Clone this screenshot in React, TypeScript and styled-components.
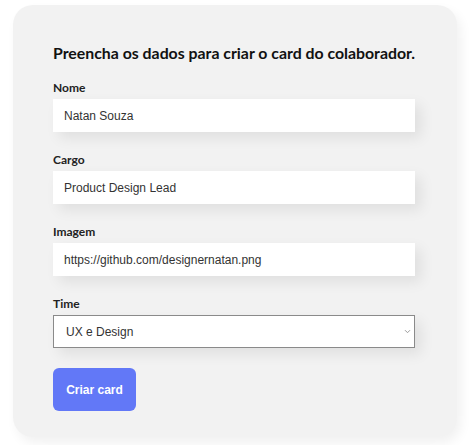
import styled, { createGlobalStyle } from "styled-components";

const GlobalStyle = createGlobalStyle`
  body {
    margin: 0;
    background: #ffffff;
  }
  * {
    box-sizing: border-box;
  }
`;

const Page = styled.div`
  padding: 5px 17px 8px 13px;
`;

const Card = styled.form`
  width: 444px;
  background: #f2f2f2;
  border-radius: 20px;
  box-shadow: 4px 6px 12px rgba(0, 0, 0, 0.06);
  padding: 38px 42px 26px 40px;
  display: flex;
  flex-direction: column;
`;

const Title = styled.h2`
  margin: 0 0 17px;
  font-family: Lato, "Noto Sans", sans-serif;
  font-weight: 700;
  font-size: 15.85px;
  line-height: 20px;
  white-space: nowrap;
  color: #111;
`;

const Field = styled.div`
  display: flex;
  flex-direction: column;
  gap: 4px;
  margin-bottom: 20px;
`;

const Label = styled.label`
  font-family: Lato, "Noto Sans", sans-serif;
  font-weight: 700;
  font-size: 12px;
  line-height: 15px;
  color: #222;
`;

const TextInput = styled.input`
  width: 362px;
  height: 33px;
  border: none;
  background: #fff;
  padding: 0 11px;
  font-family: "Liberation Sans", Arial, sans-serif;
  font-size: 12px;
  color: #333;
  box-shadow: 6px 6px 14px rgba(0, 0, 0, 0.08);
  outline: none;
`;

const SelectWrap = styled.div`
  position: relative;
  width: 362px;
`;

const SelectBox = styled.select`
  appearance: none;
  width: 362px;
  height: 33px;
  border: 1px solid #8a8a8a;
  border-radius: 0;
  background: #fff;
  padding: 0 12px;
  font-family: "Liberation Sans", Arial, sans-serif;
  font-size: 12px;
  color: #333;
  box-shadow: 6px 6px 14px rgba(0, 0, 0, 0.08);
  outline: none;
`;

const Chevron = styled.svg`
  position: absolute;
  right: 4px;
  top: 14px;
  width: 7px;
  height: 5px;
  pointer-events: none;
`;

const Button = styled.button`
  align-self: flex-start;
  flex-shrink: 0;
  width: 83px;
  height: 43px;
  border: none;
  border-radius: 6px;
  background: #6278f7;
  color: #fff;
  font-family: "Liberation Sans", Arial, sans-serif;
  font-weight: 700;
  font-size: 12px;
  cursor: pointer;
`;

const fields = [
  { id: "nome", label: "Nome", value: "Natan Souza" },
  { id: "cargo", label: "Cargo", value: "Product Design Lead" },
  { id: "imagem", label: "Imagem", value: "https://github.com/designernatan.png" },
];

export default function App() {
  return (
    <Page>
      <GlobalStyle />
      <Card onSubmit={(e) => e.preventDefault()}>
        <Title>Preencha os dados para criar o card do colaborador.</Title>
        {fields.map((f) => (
          <Field key={f.id}>
            <Label htmlFor={f.id}>{f.label}</Label>
            <TextInput id={f.id} defaultValue={f.value} />
          </Field>
        ))}
        <Field>
          <Label htmlFor="time">Time</Label>
          <SelectWrap>
            <SelectBox id="time" defaultValue="UX e Design">
              <option>Programação</option>
              <option>Front-End</option>
              <option>Data Science</option>
              <option>Devops</option>
              <option>UX e Design</option>
              <option>Mobile</option>
              <option>Inovação e Gestão</option>
            </SelectBox>
            <Chevron viewBox="0 0 7 5" fill="none">
              <path d="M1 1.2l2.5 2.5L6 1.2" stroke="#9a9a9a" strokeWidth="1" />
            </Chevron>
          </SelectWrap>
        </Field>
        <Button type="submit">Criar card</Button>
      </Card>
    </Page>
  );
}
